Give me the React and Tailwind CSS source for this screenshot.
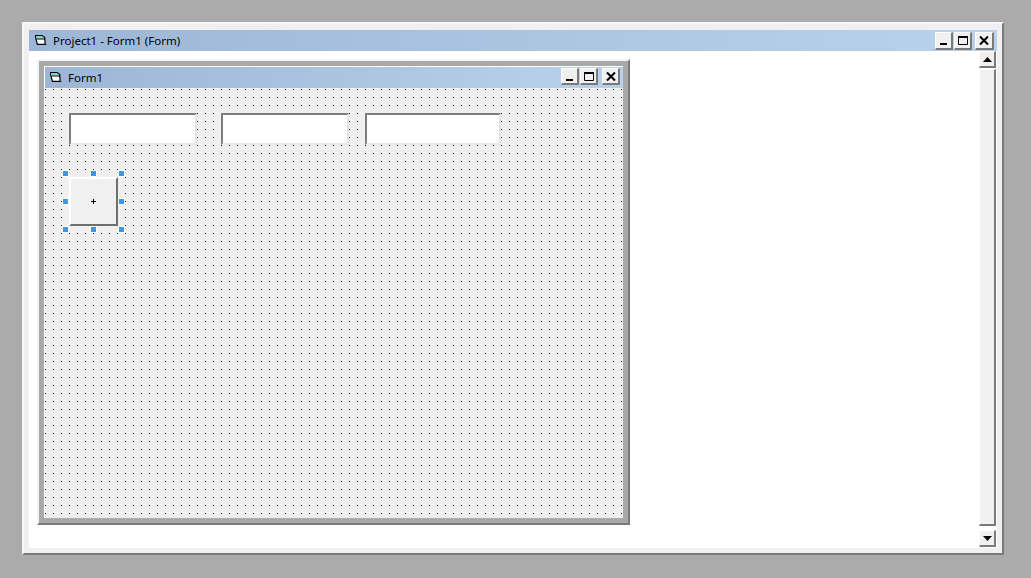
import React from 'react';

function WinIcon() {
  return (
    <svg width="12" height="11" viewBox="0 0 12 11" className="shrink-0 -mt-[1px]">
      <path d="M0.6 0.6h6.8l1 1.4h1.2l0.6 7.4H2.4L0.6 2.4z" fill="#fff" stroke="#000" strokeWidth="1.2" />
      <path d="M1.4 1.2h5.8l0.8 1.6h1.2v0.7H1.6z" fill="#6fdada" />
      <path d="M1.2 4h9" stroke="#000" strokeWidth="1" />
      <path d="M11 9h1v1h-1z" fill="#777" />
    </svg>
  );
}

function CaptionButton({ children, className }) {
  return (
    <div className={`flex items-center justify-center bg-[#f0f0f0] border-t border-l border-t-white border-l-white border-r-2 border-b-2 border-r-[#7a7a7a] border-b-[#7a7a7a] ${className}`}>
      {children}
    </div>
  );
}

function CaptionButtons({ h, closeClass }) {
  return (
    <div className="ml-auto flex items-center">
      <CaptionButton className={`w-[18px] ${h}`}>
        <svg width="12" height="11" viewBox="0 0 12 11"><path d="M2 8h7v2H2z" fill="#000" /></svg>
      </CaptionButton>
      <CaptionButton className={`ml-px w-[18px] ${h}`}>
        <svg width="12" height="11" viewBox="0 0 12 11"><path d="M1.5 1.5h9v8h-9z" fill="none" stroke="#000" /><path d="M1 1h10v2H1z" fill="#000" /></svg>
      </CaptionButton>
      <CaptionButton className={`${closeClass} ${h}`}>
        <svg width="12" height="11" viewBox="0 0 12 11"><path d="M2 1.5l8 8M10 1.5l-8 8" fill="none" stroke="#000" strokeWidth="2" /></svg>
      </CaptionButton>
    </div>
  );
}

function TextBox({ w }) {
  return <div className={`${w} h-8 bg-white border-t-2 border-l-2 border-t-[#7d7d7d] border-l-[#7d7d7d] border-r-2 border-b-2 border-r-[#e6e6e6] border-b-[#e6e6e6]`} />;
}

function Handle({ className }) {
  return <div className={`absolute w-[5px] h-[5px] bg-[#3b96ee] ring-1 ring-white ${className}`} />;
}

function ScrollButton({ children, className }) {
  return (
    <div className={`h-[17px] flex items-center justify-center bg-[#f0f0f0] border-t border-l border-t-white border-l-white border-r-2 border-b-2 border-r-[#7a7a7a] border-b-[#7a7a7a] ${className}`}>
      {children}
    </div>
  );
}

export default function App() {
  return (
    <div className="w-[1031px] h-[578px] overflow-hidden bg-[#ababab] pt-[22px] pl-[22px] font-['Noto_Sans',sans-serif] text-[11.5px] text-black">
      {/* project window */}
      <div className="w-[982px] h-[533px] flex flex-col bg-[#f0f0f0] border-t-2 border-l-2 border-t-[#f8f8f8] border-l-[#f8f8f8] border-r-2 border-b-2 border-r-[#7a7a7a] border-b-[#7a7a7a] pt-[6px] pl-[5px] pr-[5px] pb-[5px]">
        <div className="h-[21px] shrink-0 flex items-center pl-[6px] pr-[3px] bg-gradient-to-r from-[#9cb6d5] to-[#b9d2ec]">
          <WinIcon />
          <span className="ml-[6px] leading-none">Project1 - Form1 (Form)</span>
          <CaptionButtons h="h-[18px]" closeClass="ml-[3px] w-[19px]" />
        </div>
        <div className="flex-1 flex bg-white min-h-0">
          {/* form window */}
          <div className="mt-2 ml-2 w-[593px] h-[466px] flex flex-col bg-[#a9a9a9] border-t-2 border-l-2 border-t-[#f4f4f4] border-l-[#f4f4f4] border-r-2 border-b-2 border-r-[#7a7a7a] border-b-[#7a7a7a] pt-[5px] pl-[5px] pr-[5px] pb-[5px]">
            <div className="flex-1 flex flex-col border-t border-l border-white min-h-0">
              <div className="h-[21px] shrink-0 flex items-center pl-[5px] pr-[3px] bg-gradient-to-r from-[#9cb6d5] to-[#b9d2ec]">
                <WinIcon />
                <span className="ml-[6px] leading-none">Form1</span>
                <div className="ml-auto mb-[2px] flex">
                  <CaptionButtons h="h-[17px]" closeClass="ml-1 w-[18px]" />
                </div>
              </div>
              <div className="flex-1 pt-[25px] pl-6 bg-[#f0f0f0] bg-[conic-gradient(at_1px_1px,transparent_75%,#111_0)] bg-[length:8px_8px] bg-[position:0_1px]">
                <div className="flex">
                  <TextBox w="w-32" />
                  <div className="ml-6"><TextBox w="w-32" /></div>
                  <div className="ml-4"><TextBox w="w-[136px]" /></div>
                </div>
                <div className="relative mt-8 w-[49px] h-[49px] flex items-center justify-center bg-[#f0f0f0] border-t-2 border-l-2 border-t-white border-l-white border-r-2 border-b-2 border-r-[#6e6e6e] border-b-[#6e6e6e]">
                  <svg width="5" height="5" viewBox="0 0 5 5"><path d="M2 0h1v5H2zM0 2h5v1H0z" fill="#000" /></svg>
                  <Handle className="-left-[8px] -top-[8px]" />
                  <Handle className="left-[20px] -top-[8px]" />
                  <Handle className="left-[48px] -top-[8px]" />
                  <Handle className="-left-[8px] top-[20px]" />
                  <Handle className="left-[48px] top-[20px]" />
                  <Handle className="-left-[8px] top-[48px]" />
                  <Handle className="left-[20px] top-[48px]" />
                  <Handle className="left-[48px] top-[48px]" />
                </div>
              </div>
            </div>
          </div>
          {/* vertical scrollbar */}
          <div className="ml-auto mr-px w-[17px] flex flex-col">
            <ScrollButton>
              <svg width="9" height="5" viewBox="0 0 9 5"><path d="M4.5 0L9 5H0z" fill="#000" /></svg>
            </ScrollButton>
            <div className="flex-1 mt-px mb-1 bg-[#f0f0f0] border-t border-l border-t-white border-l-white border-r-2 border-b-2 border-r-[#7a7a7a] border-b-[#7a7a7a]" />
            <ScrollButton className="mb-px">
              <svg width="9" height="5" viewBox="0 0 9 5"><path d="M0 0h9L4.5 5z" fill="#000" /></svg>
            </ScrollButton>
          </div>
        </div>
      </div>
    </div>
  );
}
